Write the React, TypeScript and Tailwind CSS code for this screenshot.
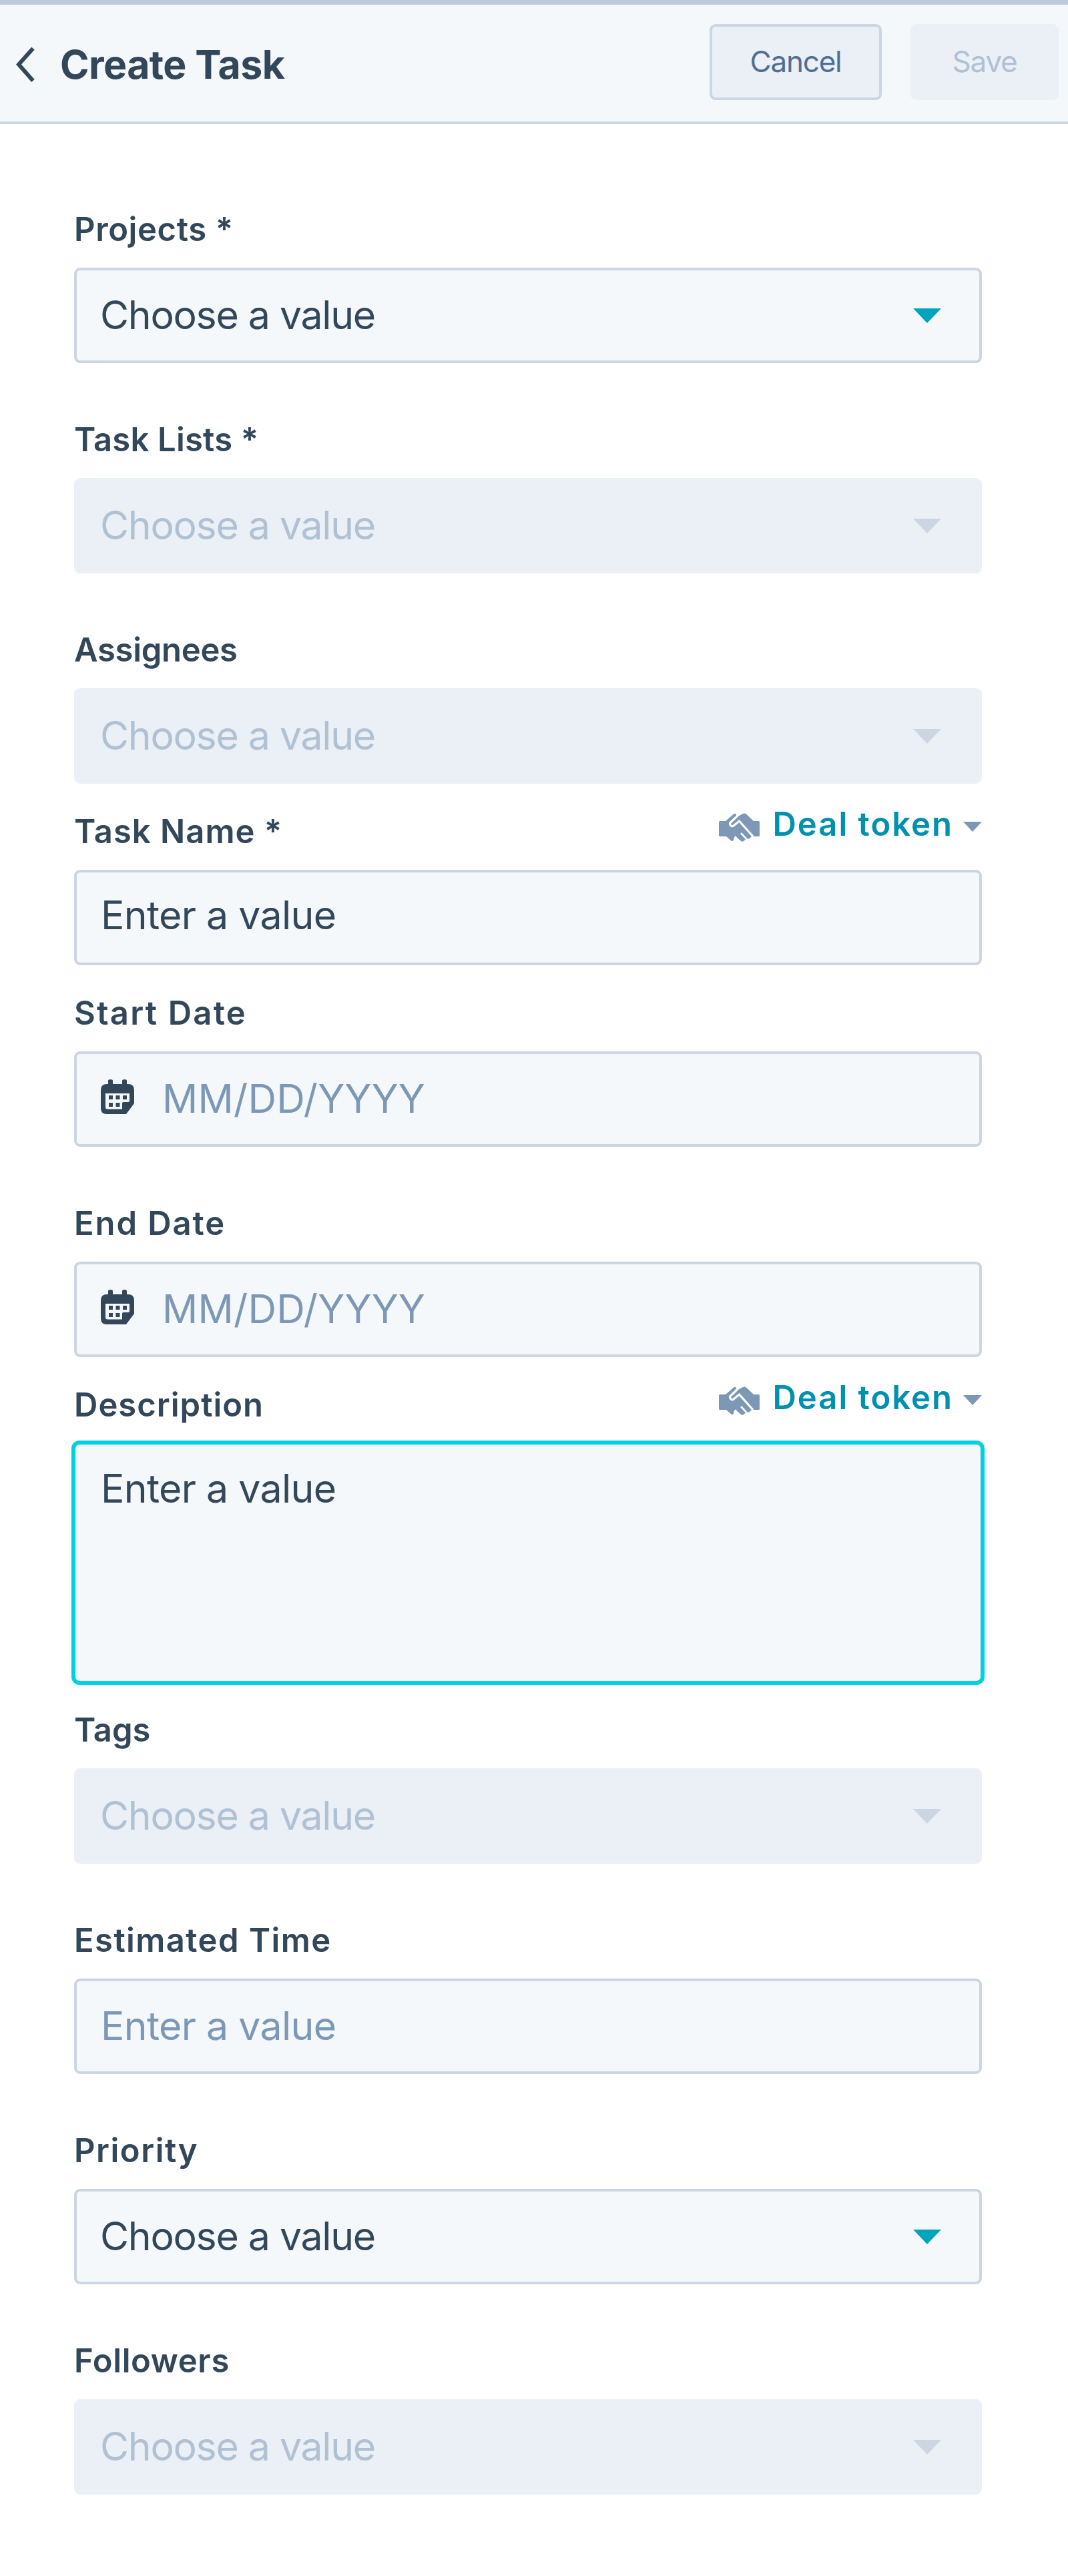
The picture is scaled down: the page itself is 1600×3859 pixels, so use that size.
import type { ReactNode } from "react";
import clsx from "clsx";

// Arrow that goes back to the previous screen
const BackIcon = () => (
  <svg viewBox="0 0 28 54" className="h-[54px] w-[28px] shrink-0" fill="none" stroke="#33475b" strokeWidth="6">
    <path d="M25.5 2.5L4 26.5L25.5 51" />
  </svg>
);

const CalendarIcon = () => (
  <svg viewBox="0 0 50 52" className="h-[52px] w-[50px] shrink-0" fill="#33475b">
    <path d="M11 7V2q0-2 3.5-2T18 2v5h14V2q0-2 3.5-2T39 2v5h2q9 0 9 9v20L38 52H9q-9 0-9-9V16q0-9 9-9z" />
    <path d="M7 21h36v11q0 2-2 2h-7q-2 0-2 2v8.5H10q-3 0-3-3z" fill="#f5f8fa" />
    <path d="M12 24h6v6h-6zM22.5 24h6v6h-6zM33 24h6v6h-6zM12 35h6v6h-6zM22.5 35h6v6h-6z" />
  </svg>
);

const HandshakeIcon = () => (
  <svg viewBox="0 0 61 43" className="h-[43px] w-[61px] shrink-0" fill="#7c98b6">
    <path d="M0 13q0-1 2-1h8L22 1.5Q26-1 26 4l-1 3 10-5.5q3-2 6 0L52 12h7q2 0 2 1v21q0 1-2 1h-7q-1 0-2-1l-3 3q-2 3-5 1l-5 4q-2 2-5-1l-7-6-3 3q1 4-3 4l-8-7H2q-2 0-2-1z" />
    <path d="M28 4L17.5 14q-2 2 0 4.5 2 2.5 4.5 0.5l8.5-7L51 35" fill="none" stroke="#fff" strokeWidth="3.2" />
    <path d="M33 30l8 8.5M24 35l5 6" fill="none" stroke="#fff" strokeWidth="2.6" />
  </svg>
);

// Small triangle on the right side of every dropdown
const Caret = ({ color }: { color: string }) => (
  <svg viewBox="0 0 42 22" className="h-[22px] w-[42px] shrink-0" fill={color}>
    <path d="M0 0h42L21 22z" />
  </svg>
);

const DealToken = () => (
  <div className="flex items-center pb-[22px]">
    <div className="pt-[9px]">
      <HandshakeIcon />
    </div>
    <span className="ml-[19px] text-[49px] font-semibold tracking-[2px] whitespace-nowrap text-[#0091ae]">
      Deal token
    </span>
    <svg viewBox="0 0 28 15" className="mt-[6px] ml-[15px] h-[15px] w-[28px]" fill="#7c98b6">
      <path d="M0 0h28L14 15z" />
    </svg>
  </div>
);

interface FieldProps {
  label: string;
  // Letter spacing of the label
  tracking?: string;
  token?: boolean;
  className?: string;
  children: ReactNode;
}

const Field = ({ label, tracking, token, className, children }: FieldProps) => (
  <div className={className}>
    <div className="mb-[27px] flex h-[60px] items-center justify-between">
      <span className={clsx("text-[49px] font-semibold whitespace-nowrap", tracking)}>{label}</span>
      {token && <DealToken />}
    </div>
    {children}
  </div>
);

const Select = ({ disabled }: { disabled?: boolean }) => (
  <div
    className={clsx(
      "flex h-[143px] items-center justify-between rounded-[9px] border-4 pr-[57px] pl-[35px]",
      disabled ? "border-[#eaf0f6] bg-[#eaf0f6] text-[#b0c1d4]" : "border-[#cbd6e2] bg-[#f5f8fa]"
    )}
  >
    <span className="text-[59px] tracking-[-1.3px]">Choose a value</span>
    <Caret color={disabled ? "#cbd6e2" : "#00a4bd"} />
  </div>
);

const TextInput = ({ placeholder }: { placeholder?: boolean }) => (
  <div className="flex h-[143px] items-center rounded-[9px] border-4 border-[#cbd6e2] bg-[#f5f8fa] pl-[36px]">
    <span className={clsx("text-[59px] tracking-[-0.7px]", placeholder ? "text-[#7c98b6]" : "pb-[7px]")}>
      Enter a value
    </span>
  </div>
);

const DateInput = () => (
  <div className="flex h-[143px] items-center rounded-[9px] border-4 border-[#cbd6e2] bg-[#f5f8fa] pl-[36px]">
    <div className="pb-[7px]">
      <CalendarIcon />
    </div>
    <span className="ml-[42px] text-[59px] tracking-[0.2px] text-[#7c98b6]">MM/DD/YYYY</span>
  </div>
);

export default function App() {
  return (
    <div className="h-[3859px] w-[1600px] bg-white font-['Inter',sans-serif] text-[#33475b]">
      <header className="flex h-[186px] justify-between border-t-[7px] border-b-4 border-t-[#bccad9] border-b-[#cbd6e2] bg-[#f5f8fa] pr-[14px] pl-[24px]">
        <div className="flex items-center pt-[5px]">
          <BackIcon />
          <h1 className="ml-[38px] text-[59px] font-bold tracking-[-0.6px]">Create Task</h1>
        </div>
        <div className="flex gap-[43px] pt-[29px]">
          <button className="h-[114px] w-[258px] rounded-[9px] border-4 border-[#cbd6e2] bg-[#eaf0f6] pb-[3px] text-[44px] tracking-[-1.2px] text-[#506e91]">
            Cancel
          </button>
          <button className="h-[114px] w-[222px] rounded-[9px] bg-[#eaf0f6] pb-[3px] text-[44px] tracking-[-1.2px] text-[#b0c1d4]">
            Save
          </button>
        </div>
      </header>

      <main className="pt-[128px] pr-[129px] pl-[111px]">
        <Field label="Projects *" tracking="tracking-[0.6px]">
          <Select />
        </Field>
        <Field label="Task Lists *" tracking="tracking-[0.2px]" className="mt-[85px]">
          <Select disabled />
        </Field>
        <Field label="Assignees" tracking="tracking-[-0.3px]" className="mt-[85px]">
          <Select disabled />
        </Field>
        <Field label="Task Name *" tracking="tracking-[1px]" className="mt-[42px]" token>
          <TextInput />
        </Field>
        <Field label="Start Date" tracking="tracking-[2.2px]" className="mt-[42px]">
          <DateInput />
        </Field>
        <Field label="End Date" tracking="tracking-[1.9px]" className="mt-[85px]">
          <DateInput />
        </Field>
        <Field label="Description" tracking="tracking-[1px]" className="mt-[42px]" token>
          {/* Focused textarea, its ring sticks out of the column a little */}
          <div className="-mx-[4px] -mt-[4px] h-[366px] rounded-[12px] border-[6px] border-[#00d0e4] bg-[#f5f8fa] pt-[30px] pl-[38px] leading-[71px]">
            <span className="text-[59px] tracking-[-0.7px]">Enter a value</span>
          </div>
        </Field>
        <Field label="Tags" className="mt-[38px]">
          <Select disabled />
        </Field>
        <Field label="Estimated Time" tracking="tracking-[1.4px]" className="mt-[85px]">
          <TextInput placeholder />
        </Field>
        <Field label="Priority" tracking="tracking-[1.5px]" className="mt-[85px]">
          <Select />
        </Field>
        <Field label="Followers" tracking="tracking-[0.6px]" className="mt-[85px]">
          <Select disabled />
        </Field>
      </main>
    </div>
  );
}
